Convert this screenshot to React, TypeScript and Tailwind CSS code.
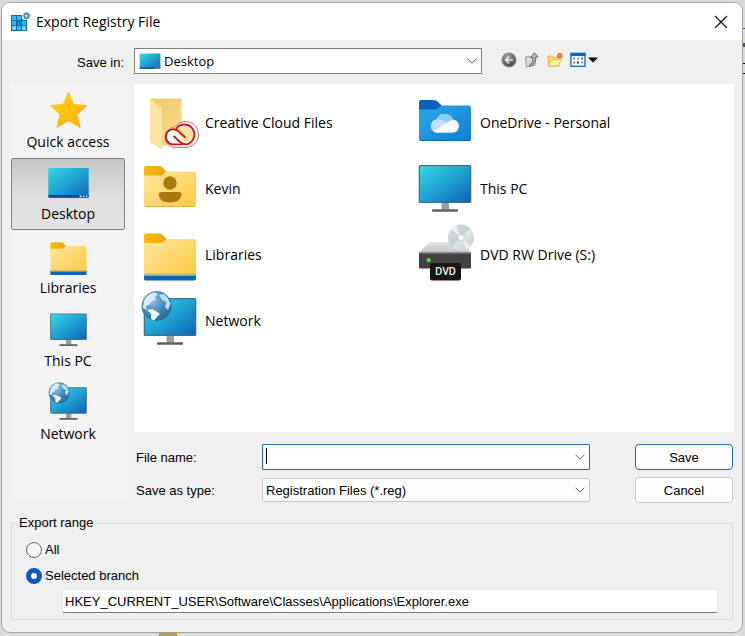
import type { ReactNode } from 'react'

function Gradients() {
    return (
        <svg width="0" height="0" className="absolute" aria-hidden="true">
            <defs>
                <linearGradient id="screen" x1="0" y1="0" x2="1" y2="1">
                    <stop offset="0" stopColor="#38d6e4" />
                    <stop offset="0.5" stopColor="#1ea3d2" />
                    <stop offset="1" stopColor="#0f62b8" />
                </linearGradient>
                <linearGradient id="folder" x1="0" y1="0" x2="1" y2="1">
                    <stop offset="0" stopColor="#ffe7a1" />
                    <stop offset="1" stopColor="#fcca42" />
                </linearGradient>
                <linearGradient id="tab" x1="0" y1="0" x2="1" y2="0">
                    <stop offset="0" stopColor="#fdb90f" />
                    <stop offset="1" stopColor="#eda50c" />
                </linearGradient>
                <linearGradient id="openFolder" x1="0" y1="0" x2="1" y2="1">
                    <stop offset="0" stopColor="#e9c766" />
                    <stop offset="1" stopColor="#fbdf92" />
                </linearGradient>
                <linearGradient id="cloudFolder" x1="0" y1="0" x2="1" y2="1">
                    <stop offset="0" stopColor="#2fa9e8" />
                    <stop offset="1" stopColor="#0d7fd0" />
                </linearGradient>
                <linearGradient id="star" x1="0" y1="0" x2="1" y2="1">
                    <stop offset="0" stopColor="#ffd21f" />
                    <stop offset="1" stopColor="#fbae0a" />
                </linearGradient>
                <linearGradient id="drive" x1="0" y1="0" x2="0" y2="1">
                    <stop offset="0" stopColor="#e4e4e6" />
                    <stop offset="1" stopColor="#c2c2c5" />
                </linearGradient>
                <radialGradient id="globe" cx="0.35" cy="0.3" r="0.75">
                    <stop offset="0" stopColor="#8cc6e8" />
                    <stop offset="0.6" stopColor="#3f86b5" />
                    <stop offset="1" stopColor="#2b6590" />
                </radialGradient>
                <linearGradient id="disc" x1="0" y1="0" x2="1" y2="1">
                    <stop offset="0" stopColor="#dde2e4" />
                    <stop offset="0.45" stopColor="#c6ced1" />
                    <stop offset="0.55" stopColor="#dfe6e6" />
                    <stop offset="1" stopColor="#bfc6ca" />
                </linearGradient>
                <radialGradient id="ball" cx="0.4" cy="0.25" r="0.8">
                    <stop offset="0" stopColor="#a5a5a5" />
                    <stop offset="1" stopColor="#3d3d3d" />
                </radialGradient>
            </defs>
        </svg>
    )
}

function Art({ children }: { children: ReactNode }) {
    return <svg viewBox="0 0 56 56" className="size-full overflow-visible" aria-hidden="true">{children}</svg>
}

function StarIcon() {
    return (
        <Art>
            <path d="M28 2 L35.6 19.4 L54 21 L40.2 33.4 L44.5 52 L28 42.4 L11.5 52 L15.8 33.4 L2 21 L20.4 19.4 Z" fill="url(#star)" stroke="url(#star)" strokeWidth="1.5" strokeLinejoin="round" />
        </Art>
    )
}

function DesktopIcon() {
    return (
        <Art>
            <rect x="-1" y="7" width="58" height="43" rx="2" fill="url(#screen)" />
            <path d="M-1 46 H57 V48 Q57 50 55 50 H1 Q-1 50 -1 48 Z" fill="#0b4a8c" />
            <path d="M44 48 h3 M49 48 h2 M53 48 h2" stroke="#d8f1fb" strokeWidth="2.5" />
        </Art>
    )
}

function FolderShape() {
    return (
        <>
            <path d="M2 8 Q2 6 4 6 H17 Q19 6 21 8 L25 12 V20 H2 Z" fill="url(#tab)" />
            <path d="M2 15.5 H18 Q20 15.5 21.5 14 L23 12.5 Q24 11.5 26 11.5 H52 Q54 11.5 54 13.5 V45 Q54 47 52 47 H4 Q2 47 2 45 Z" fill="url(#folder)" />
            <path d="M3 46.5 H53" stroke="#e2b244" />
        </>
    )
}

function LibrariesIcon() {
    return (
        <Art>
            <path d="M2 48 H54 V53 Q54 54.5 52 54.5 H4 Q2 54.5 2 53 Z" fill="#0c66b8" />
            <path d="M2 49 H54" stroke="#5fb4dc" strokeWidth="2" />
            <g transform="translate(0 1.5)">
                <FolderShape />
            </g>
        </Art>
    )
}

function UserFolderIcon() {
    return (
        <Art>
            <FolderShape />
            <circle cx="28" cy="23" r="6.7" fill="#a8790d" />
            <path d="M19 32 H37.5 Q39.5 32 39.5 34.5 Q38.5 42.5 28 42.5 Q17.5 42.5 16.7 34.5 Q16.7 32 19 32 Z" fill="#a8790d" />
        </Art>
    )
}

function Monitor() {
    return (
        <>
            <rect x="24.5" y="42" width="7.5" height="8" fill="#9a9ea3" />
            <rect x="15" y="49.3" width="26" height="2.5" rx="0.8" fill="#5c6167" />
            <rect x="1.7" y="5" width="52.6" height="38" rx="1.5" fill="#3f6f8b" />
            <rect x="3" y="6.2" width="50" height="35.5" rx="0.5" fill="url(#screen)" />
        </>
    )
}

function PcIcon() {
    return (
        <Art>
            <Monitor />
        </Art>
    )
}

function NetworkIcon() {
    return (
        <Art>
            <g transform="translate(0 1)">
                <Monitor />
            </g>
            <circle cx="14.5" cy="14" r="15" fill="url(#globe)" />
            <path d="M2 9 Q5 2 12 0.5 L16 2 L13 5 L14 8 L10 9 L7 13 L4 14 L5 18 L1 16 Z" fill="#d7ecf7" />
            <path d="M5 18 L10 17 L14 19 L18 22 L15 25 L12 28.5 L9 27 L9 22 Z" fill="#eef7fb" />
            <path d="M17 3 L22 2 L26 6 L28.5 12 L26 18 L23 15 L24 10 L20 8 Z" fill="#b9dbed" />
        </Art>
    )
}

function CreativeCloudIcon() {
    return (
        <Art>
            <path d="M8 4.5 H39.5 V48 L20 52 L8 48 Z" fill="url(#openFolder)" />
            <path d="M8 4.5 L18 12 Q20 13.5 20 16 V55.5 L9.5 49.5 Q8 48.5 8 47 Z" fill="#fbe4a2" />
            <path d="M32 53.5 A10.3 10.3 0 0 1 33 33 A13 13 0 1 1 43.5 53.5 Z" fill="#fff" stroke="#dc5a5a" strokeWidth="0.9" />
            <path d="M33 37 L39.5 32.5 H46 L51 38 V44 L46 48 H43 L34 39 Z" fill="#fbe3a0" />
            <path d="M40.5 50.4 H32 A7.6 7.6 0 1 1 37 37.6 L43.5 43.8" fill="none" stroke="#cf1519" strokeWidth="1.9" />
            <path d="M34 35 A10 10 0 1 1 44 50.4 Q40.5 50.4 38 48 L31.5 42" fill="none" stroke="#cf1519" strokeWidth="1.9" />
        </Art>
    )
}

function OneDriveIcon() {
    return (
        <Art>
            <path d="M2 8 Q2 6 4 6 H17 Q19 6 21 8 L25 12 V20 H2 Z" fill="#0a62bb" />
            <path d="M2 15.5 H18 Q20 15.5 21.5 14 L23 12.5 Q24 11.5 26 11.5 H52 Q54 11.5 54 13.5 V45 Q54 47 52 47 H4 Q2 47 2 45 Z" fill="url(#cloudFolder)" />
            <path d="M3 46.5 H53" stroke="#0a68b8" />
            <path d="M20 38.5 A6.5 6.5 0 0 1 19 25.6 A9.5 9.5 0 0 1 36.3 25.5 A6.6 6.6 0 0 1 36.5 38.5 Z" fill="#c3e2f7" />
            <path d="M19 25.6 Q24 24 29 29 L36.3 25.5 A9.5 9.5 0 0 0 19 25.6 Z" fill="#8fcbf1" />
            <path d="M16 37 L29 29.5 Q33 25.5 37 26 A6.5 6.5 0 0 1 36.5 38.5 H20 Q17.5 38.5 16 37 Z" fill="#f7fbfe" />
        </Art>
    )
}

function DvdIcon() {
    return (
        <Art>
            <path d="M12 16 H46 L54 27 H2 Z" fill="url(#drive)" />
            <rect x="2" y="26.5" width="52" height="16" rx="1" fill="#424244" />
            <path d="M2 27 H54" stroke="#8d8d90" />
            <rect x="9.8" y="32.3" width="3.8" height="3.8" rx="1" fill="#3bea45" />
            <circle cx="44" cy="11.5" r="13" fill="url(#disc)" />
            <path d="M44 11.5 L34 3 A13 13 0 0 1 39 -0.5 Z M44 11.5 L54 20 A13 13 0 0 1 49 23.5 Z" fill="#e9eeef" />
            <circle cx="44" cy="11.5" r="3.5" fill="#eef1f2" stroke="#bcc4c7" strokeWidth="0.7" />
            <circle cx="44" cy="11.5" r="1.3" fill="#fff" />
            <rect x="13" y="37" width="31" height="17.5" rx="2" fill="#151515" />
            <text x="28.5" y="49.3" textAnchor="middle" fontSize="10" fontWeight="600" fill="#fff" fontFamily="Open Sans, sans-serif">DVD</text>
        </Art>
    )
}

function RegistryIcon() {
    return (
        <svg viewBox="0 0 20 20" className="size-5" aria-hidden="true">
            <rect x="0" y="3" width="16" height="16" fill="#0d6cab" />
            <path d="M1 4 h4 v4 h-4 z M6 4 h4 v4 h-4 z M1 9 h4 v4 h-4 z M11 9 h4 v4 h-4 z M6 14 h4 v4 h-4 z" fill="#35b8ee" />
            <path d="M6 9 h4 v4 h-4 z" fill="#1787cc" />
            <path d="M1 14 h4 v4 h-4 z M11 14 h4 v4 h-4 z" fill="#72d5f7" />
            <path d="M11 0 H20 V8 H12 V7 H11 Z" fill="#fff" />
            <path d="M15.5 0 V7.6 M11.7 3.8 H19.3 M12.8 1.1 L18.2 6.5 M18.2 1.1 L12.8 6.5" stroke="#5d9cc2" strokeWidth="1.5" />
            <circle cx="15.5" cy="3.8" r="2.1" fill="#d9eef8" stroke="#3f86b3" strokeWidth="1.5" />
        </svg>
    )
}

function Chevron() {
    return (
        <svg viewBox="0 0 10 6" className="pointer-events-none absolute top-1/2 right-[5px] h-[6px] w-[10px] -translate-y-1/2" aria-hidden="true">
            <path d="M0.5 0.7 L5 5.2 L9.5 0.7" fill="none" stroke="#5a5a5a" />
        </svg>
    )
}

function ToolIcons() {
    return (
        <div className="ml-[19px] flex items-center gap-[7px]">
            <button type="button" aria-label="Back" className="size-4">
                <svg viewBox="0 0 16 16" className="size-4">
                    <circle cx="8" cy="8" r="7" fill="url(#ball)" stroke="#8a8a8a" strokeWidth="1.2" />
                    <path d="M12 8 H5 M8 4.7 L4.6 8 L8 11.3" fill="none" stroke="#e6e6e6" strokeWidth="1.7" />
                </svg>
            </button>
            <button type="button" aria-label="Up one level" className="size-4">
                <svg viewBox="0 0 16 16" className="size-4">
                    <path d="M1.5 5 L5 4 L6 5.5 L11 4.5 V13 L2.5 15 Z" fill="#dcdcdc" stroke="#8b8b8b" strokeWidth="0.9" />
                    <path d="M5 13.5 Q9.5 11 9 5.5 H6.5 L10.5 0.8 L14 4.8 H11.8 Q12.500 11 6.5 14.3 Z" fill="#bdbdbd" stroke="#555" strokeWidth="0.9" />
                </svg>
            </button>
            <button type="button" aria-label="New folder" className="size-4">
                <svg viewBox="0 0 16 16" className="size-4">
                    <path d="M1 4 H5 L6.5 5.5 H12 V14 L1.5 14.5 Z" fill="#fbd868" stroke="#d9a637" strokeWidth="0.8" />
                    <path d="M1.5 14.5 L4 8 L14 7 L12 13.5 Z" fill="#fff0a4" stroke="#e0b040" strokeWidth="0.8" />
                    <circle cx="12.8" cy="3.8" r="1.9" fill="#ffd9a0" stroke="#f0642a" strokeWidth="1.7" />
                </svg>
            </button>
            <button type="button" aria-label="View menu" className="flex h-4 items-center gap-[2px]">
                <svg viewBox="0 0 16 16" className="size-4">
                    <rect x="1" y="1.3" width="14" height="13" fill="#fff" stroke="#1268c0" strokeWidth="1.3" />
                    <path d="M0.5 2.5 H15.5" stroke="#1268c0" strokeWidth="3" />
                    <path d="M3 6.5 h2 M11 10.5 h2" stroke="#6f9bd8" strokeWidth="2" />
                    <path d="M7 6.5 h2" stroke="#8a9aa8" strokeWidth="2" />
                    <path d="M11 6.5 h2" stroke="#2f9a63" strokeWidth="2" />
                    <path d="M3 10.5 h2" stroke="#e2743a" strokeWidth="2" />
                    <path d="M7 10.5 h2" stroke="#223a70" strokeWidth="2" />
                </svg>
                <svg viewBox="0 0 10 6" className="h-[6px] w-[10px]">
                    <path d="M0 0.5 H10 L5 5.5 Z" fill="#000" />
                </svg>
            </button>
        </div>
    )
}

const places = [
    { name: 'Quick access', icon: <StarIcon /> },
    { name: 'Desktop', icon: <DesktopIcon />, active: true },
    { name: 'Libraries', icon: <LibrariesIcon /> },
    { name: 'This PC', icon: <PcIcon /> },
    { name: 'Network', icon: <NetworkIcon /> },
]

const items = [
    { name: 'Creative Cloud Files', icon: <CreativeCloudIcon /> },
    { name: 'OneDrive - Personal', icon: <OneDriveIcon /> },
    { name: 'Kevin', icon: <UserFolderIcon /> },
    { name: 'This PC', icon: <PcIcon /> },
    { name: 'Libraries', icon: <LibrariesIcon /> },
    { name: 'DVD RW Drive (S:)', icon: <DvdIcon /> },
    { name: 'Network', icon: <NetworkIcon /> },
]

function App() {
    return (
        <div className="relative min-h-screen bg-[#dadada] pt-[2px] pr-[2px] pb-[2px] pl-px font-['Liberation_Sans',Arial,sans-serif] text-[13px] leading-4 text-black">
            <Gradients />
            <div className="absolute top-[28px] right-0 h-px w-[3px] bg-[#555]"></div>
            <div className="absolute top-[43px] right-0 h-[4px] w-[2px] bg-[#4a4a88]"></div>
            <div className="absolute top-[63px] right-0 h-[11px] w-[3px] border-y border-black"></div>
            <div className="absolute bottom-0 left-[159px] h-[4px] w-[18px] bg-[#b5a53c]"></div>

            <div className="relative overflow-hidden rounded-[9px] border border-[#a3a3a3] bg-[#f0f0f0]">
                <header className="flex h-[37px] items-center bg-white pr-[14px] pl-[9px]">
                    <RegistryIcon />
                    <h1 className="ml-[5px] flex-1 font-['Open_Sans',sans-serif] text-[14px]">Export Registry File</h1>
                    <button type="button" aria-label="Close">
                        <svg viewBox="0 0 14 14" className="size-[14px]">
                            <path d="M1 1 L13 13 M13 1 L1 13" stroke="#1a1a1a" strokeWidth="1.3" />
                        </svg>
                    </button>
                </header>

                <div className="flex h-[44px] items-start pt-2">
                    <label htmlFor="folder-select" className="w-[122px] pt-[7px] text-right">Save in:</label>
                    <div className="relative ml-[10px] w-[47%]">
                        <span className="pointer-events-none absolute top-[3px] left-[6px] size-5">
                            <DesktopIcon />
                        </span>
                        <select id="folder-select" className="h-[26px] w-full appearance-none border border-[#7d7d7d] bg-white pl-[29px] font-['Open_Sans',sans-serif] text-[13px]">
                            <option>Desktop</option>
                        </select>
                        <Chevron />
                    </div>
                    <div className="pt-1">
                        <ToolIcons />
                    </div>
                </div>

                <div className="flex items-start gap-[7px] pr-2 pl-2">
                    <nav className="h-[415px] w-[117px] shrink-0 bg-[#f4f4f4] pt-px pr-[2px] pl-px font-['Open_Sans',sans-serif] text-[14px]">
                        {places.map((place) => (
                            <button
                                key={place.name}
                                type="button"
                                className={
                                    place.active
                                        ? 'mb-px flex h-[72px] w-full flex-col items-center rounded-[2px] border border-[#808080] bg-linear-to-b from-[#c6c6c6] via-[#dedede] to-[#e4e4e4] pt-1'
                                        : 'flex h-[73px] w-full flex-col items-center pt-[6px]'
                                }
                            >
                                <span className="size-[39px]">{place.icon}</span>
                                <span className="mt-px leading-[22px]">{place.name}</span>
                            </button>
                        ))}
                    </nav>

                    <div className="min-w-0 flex-1">
                        <ul className="grid h-[348px] grid-cols-[275px_1fr] content-start bg-white pt-[5px] pl-2 font-['Open_Sans',sans-serif] text-[14px]">
                            {items.map((item) => (
                                <li key={item.name} className="flex h-[66px] items-center gap-[7px]">
                                    <span className="size-[56px]">{item.icon}</span>
                                    <span className="pt-[2px]">{item.name}</span>
                                </li>
                            ))}
                        </ul>

                        <div className="mt-3 grid grid-cols-[128px_1fr_98px] items-center gap-y-[7px] pr-px">
                            <label htmlFor="file-name" className="pt-[2px] pl-[2px]">File name:</label>
                            <div className="relative mr-[45px]">
                                <input id="file-name" type="text" className="block h-[26px] w-full rounded-[1px] border border-[#1b6fb5] bg-white px-1 outline-none" />
                                <span className="absolute top-1 left-1 h-4 w-px bg-black"></span>
                                <Chevron />
                            </div>
                            <button type="submit" className="h-[26px] rounded-[4px] border border-[#1f6cad] bg-[#fdfdfd] pt-[2px]">Save</button>

                            <label htmlFor="file-type" className="pt-[2px] pl-[2px]">Save as type:</label>
                            <div className="relative mr-[45px]">
                                <select id="file-type" className="block h-6 w-full appearance-none rounded-[2px] border border-[#c8c8c8] bg-[#fdfdfd] pt-px pl-[3px]">
                                    <option>Registration Files (*.reg)</option>
                                </select>
                                <Chevron />
                            </div>
                            <button type="button" className="h-[26px] rounded-[4px] border border-[#cacaca] bg-[#fdfdfd] pt-[2px]">Cancel</button>
                        </div>
                    </div>
                </div>

                <fieldset className="mx-[9px] mt-3 mb-3 border border-[#dcdcdc] pr-[14px] pb-[6px] pl-[14px]">
                    <legend className="-ml-2 px-px">Export range</legend>
                    <label className="mt-[11px] flex items-center gap-[3px]">
                        <input type="radio" name="range" className="size-4 appearance-none rounded-full border border-[#6a6a6a] bg-[#f6f6f6] checked:border-5 checked:border-[#0b5cb8] checked:bg-white" />
                        All
                    </label>
                    <label className="mt-[10px] flex items-center gap-[3px]">
                        <input type="radio" name="range" defaultChecked className="size-4 appearance-none rounded-full border border-[#6a6a6a] bg-[#f6f6f6] checked:border-5 checked:border-[#0b5cb8] checked:bg-white" />
                        Selected branch
                    </label>
                    <div className="mt-[5px] pl-9">
                        <input
                            type="text"
                            aria-label="Branch"
                            defaultValue="HKEY_CURRENT_USER\Software\Classes\Applications\Explorer.exe"
                            className="block h-6 w-full rounded-[2px] border border-[#e6e6e6] border-b-[#7a7a7a] bg-white px-[2px] outline-none"
                        />
                    </div>
                </fieldset>
            </div>
        </div>
    )
}

export default App
